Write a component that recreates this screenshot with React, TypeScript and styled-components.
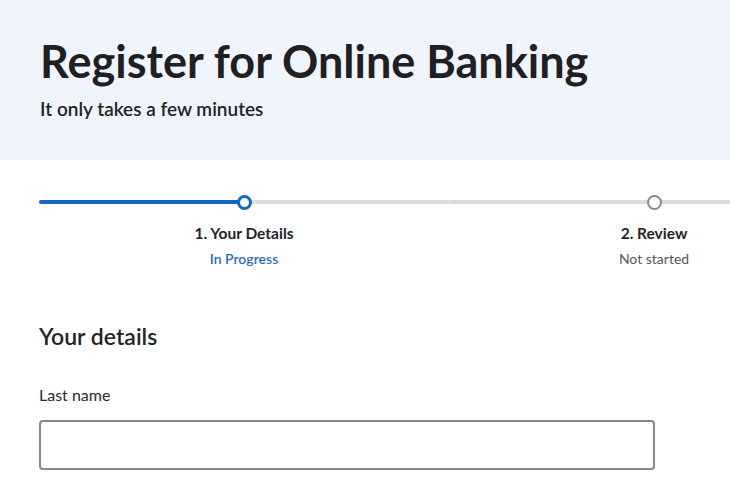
import React from "react";
import styled, { createGlobalStyle } from "styled-components";

const Global = createGlobalStyle`
  html, body { margin: 0; padding: 0; background: #ffffff; }
  body { font-family: Lato, "Open Sans", sans-serif; color: #222326; overflow: hidden; }
  * { box-sizing: border-box; }
`;

const Page = styled.div`
  width: 730px;
  height: 496px;
  overflow: hidden;
`;

const Hero = styled.header`
  height: 160px;
  background: #f0f5fd;
  padding: 35px 0 0 40px;
`;

const Title = styled.h1`
  margin: 0;
  font-size: 45px;
  line-height: 52px;
  font-weight: 700;
  color: #1f2024;
  white-space: nowrap;
`;

const Subtitle = styled.p`
  margin: 10px 0 0;
  font-size: 19px;
  line-height: 24px;
  font-weight: 600;
  color: #222326;
`;

const Main = styled.main`
  padding: 34px 0 0 39px;
`;

const Stepper = styled.ol`
  list-style: none;
  margin: 0;
  padding: 0;
  display: grid;
  grid-template-columns: repeat(2, 410px);
  width: 820px;
`;

const Step = styled.li`
  display: flex;
  flex-direction: column;
  align-items: center;
`;

const Track = styled.div`
  position: relative;
  width: 100%;
  height: 16px;
  display: flex;
  align-items: center;
  justify-content: center;
`;

const Line = styled.span<{ $left: string; $right: string }>`
  position: absolute;
  top: 50%;
  left: 0;
  right: -1px;
  height: 4px;
  margin-top: -2px;
  background: linear-gradient(
    to right,
    ${(p) => p.$left} 0 50%,
    ${(p) => p.$right} 50% 100%
  );
  border-radius: 2px;
`;

const Dot = styled.span<{ $color: string; $w: number }>`
  position: relative;
  width: 15px;
  height: 15px;
  border-radius: 50%;
  background: #ffffff;
  border: ${(p) => p.$w}px solid ${(p) => p.$color};
`;

const StepName = styled.div`
  margin-top: 14px;
  font-size: 15.5px;
  line-height: 18px;
  font-weight: 700;
  color: #232428;
`;

const StepStatus = styled.div<{ $active?: boolean }>`
  margin-top: 8px;
  font-size: 14px;
  line-height: 18px;
  font-weight: ${(p) => (p.$active ? 600 : 400)};
  color: ${(p) => (p.$active ? "#2b6cb9" : "#555659")};
`;

const Section = styled.section`
  margin-top: 55px;
`;

const SectionTitle = styled.h2`
  margin: 0;
  font-size: 23px;
  line-height: 26px;
  font-weight: 600;
  color: #232428;
`;

const Field = styled.div`
  margin-top: 36px;
  display: flex;
  flex-direction: column;
  gap: 15px;
`;

const Label = styled.label`
  font-size: 16px;
  line-height: 20px;
  color: #2a2b2e;
`;

const Input = styled.input`
  width: 616px;
  height: 50px;
  border: 2px solid #868686;
  border-radius: 4px;
  background: #fff;
  font: inherit;
  padding: 0 12px;
  outline: none;
`;

const steps = [
  { name: "1. Your Details", status: "In Progress", active: true },
  { name: "2. Review", status: "Not started", active: false },
];

export default function App() {
  return (
    <Page>
      <Global />
      <Hero>
        <Title>Register for Online Banking</Title>
        <Subtitle>It only takes a few minutes</Subtitle>
      </Hero>
      <Main>
        <Stepper>
          {steps.map((s) => (
            <Step key={s.name}>
              <Track>
                <Line
                  $left={s.active ? "#1565c8" : "#dcdcdc"}
                  $right="#dcdcdc"
                />
                <Dot $color={s.active ? "#1565c8" : "#8a8a8a"} $w={s.active ? 3 : 2.5} />
              </Track>
              <StepName>{s.name}</StepName>
              <StepStatus $active={s.active}>{s.status}</StepStatus>
            </Step>
          ))}
        </Stepper>
        <Section>
          <SectionTitle>Your details</SectionTitle>
          <Field>
            <Label htmlFor="last-name">Last name</Label>
            <Input id="last-name" type="text" />
          </Field>
        </Section>
      </Main>
    </Page>
  );
}
